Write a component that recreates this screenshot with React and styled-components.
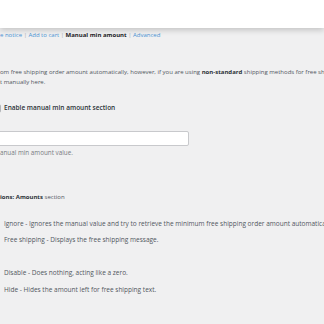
import styled, { createGlobalStyle } from "styled-components";

const GlobalStyle = createGlobalStyle`
  html, body {
    margin: 0;
    padding: 0;
    background: #f0f0f1;
  }
  body {
    font-family: "Open Sans", "Noto Sans", sans-serif;
    color: #50575e;
  }
`;

const Page = styled.div`
  width: 324px;
  height: 324px;
  overflow: hidden;
  background: #f0f0f1;
  font-size: 6px;
`;

const Header = styled.header`
  height: 28px;
  background: #fff;
  box-shadow: 0 2px 6px rgba(0, 0, 0, 0.2);
  position: relative;
`;

const Content = styled.main`
  display: flex;
  flex-direction: column;
`;

const Row = styled.div`
  margin-top: ${(p) => p.$top || 0}px;
  padding-left: ${(p) => p.$indent || 0}px;
  font-size: ${(p) => p.$size || 6}px;
  height: 10px;
  line-height: 10px;
  white-space: nowrap;
  display: flex;
  align-items: center;
`;

const SubNav = styled(Row)`
  gap: 1.5px;
`;

const NavLink = styled.a`
  color: #4a93d4;
  text-decoration: none;
`;

const Current = styled.span`
  color: #1d2327;
  font-weight: 700;
`;

const Sep = styled.span`
  color: #a7aaad;
`;

const Para = styled.p`
  margin: 28px 0 0;
  line-height: 9.5px;
  white-space: nowrap;
`;

const Label = styled.label`
  display: flex;
  align-items: center;
  gap: 3px;
  color: #2c3338;
  font-weight: 600;
`;

const Check = styled.span`
  width: 9px;
  height: 9px;
  margin-left: -8px;
  border: 1px solid #b4b6ba;
  border-radius: 2px;
  background: #fff;
  box-sizing: border-box;
`;

const Input = styled.input`
  margin: 18px 0 0 -4px;
  width: 193px;
  height: 15px;
  box-sizing: border-box;
  border: 1px solid #c8c9cc;
  border-radius: 2px;
  background: #fff;
  outline: none;
`;

const Desc = styled(Row)`
  color: #787c82;
`;

const Strong = styled.strong`
  font-weight: 700;
  color: #2c3338;
`;

const options = [
  { top: 17, text: "Ignore - Ignores the manual value and try to retrieve the minimum free shipping order amount automatically." },
  { top: 6, text: "Free shipping - Displays the free shipping message." },
  { top: 23, text: "Disable - Does nothing, acting like a zero." },
  { top: 7, text: "Hide - Hides the amount left for free shipping text." },
];

export default function App() {
  return (
    <>
      <GlobalStyle />
      <Page>
        <Header />
        <Content>
          <SubNav $top={2}>
            <NavLink href="#">e notice</NavLink>
            <Sep>|</Sep>
            <NavLink href="#">Add to cart</NavLink>
            <Sep>|</Sep>
            <Current>Manual min amount</Current>
            <Sep>|</Sep>
            <NavLink href="#">Advanced</NavLink>
          </SubNav>
          <Para>
            om free shipping order amount automatically, however, if you are using{" "}
            <Strong>non-standard</Strong> shipping methods for free shipping, you can set
            <br />
            t manually here.
          </Para>
          <Row $top={16} $size={6.5}>
            <Label>
              <Check />
              Enable manual min amount section
            </Label>
          </Row>
          <Input type="text" />
          <Desc $top={2} $size={6.3}>anual min amount value.</Desc>
          <Row $top={34}>
            <Strong>ions: Amounts</Strong>&nbsp;section
          </Row>
          {options.map((o) => (
            <Row key={o.text} $top={o.top} $indent={4} $size={6.5}>
              {o.text}
            </Row>
          ))}
        </Content>
      </Page>
    </>
  );
}
